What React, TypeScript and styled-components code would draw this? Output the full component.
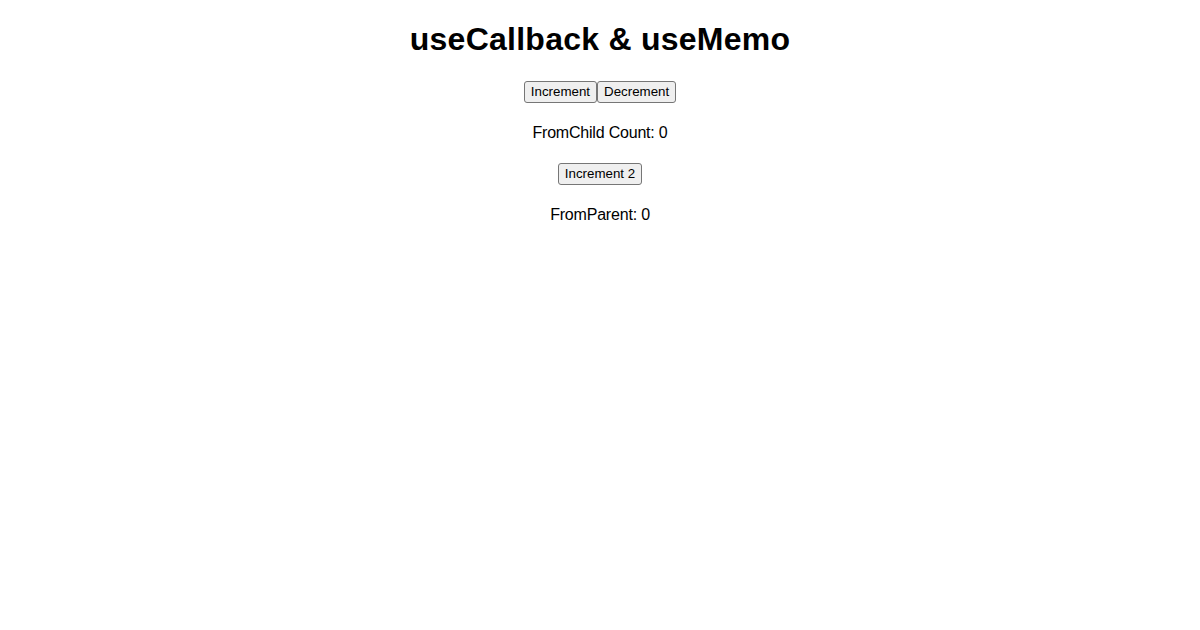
import React, { useCallback, useMemo, useState } from "react";
import styled, { createGlobalStyle } from "styled-components";

const GlobalStyle = createGlobalStyle`
  body {
    margin: 0;
    background: #fff;
    color: #000;
    font-family: "Liberation Sans", Arial, sans-serif;
  }
`;

const Page = styled.div`
  text-align: center;
`;

const Title = styled.h1`
  font-size: 32px;
  font-weight: bold;
  letter-spacing: 0.25px;
  margin: 21.44px 0 22.5px;
`;

const ButtonRow = styled.div`
  display: flex;
  justify-content: center;
`;

const Button = styled.button`
  font-family: "Liberation Sans", Arial, sans-serif;
  font-size: 13.33px;
  height: 22px;
  padding: 0 6px;
  border: 1px solid #767676;
  border-radius: 3px;
  background: #efefef;
  color: #000;
`;

const Line = styled.p`
  font-size: 16px;
  line-height: 20px;
  letter-spacing: -0.2px;
  margin: 20px 0;
`;

function Child({ count, onIncrement }: { count: number; onIncrement: () => void }) {
  return (
    <>
      <Line>FromChild Count: {count}</Line>
      <ButtonRow>
        <Button onClick={onIncrement}>Increment 2</Button>
      </ButtonRow>
    </>
  );
}

export default function App() {
  const [count, setCount] = useState(0);
  const [parent, setParent] = useState(0);

  const increment2 = useCallback(() => setParent((p) => p + 1), []);
  const fromParent = useMemo(() => parent, [parent]);

  return (
    <Page>
      <GlobalStyle />
      <Title>useCallback &amp; useMemo</Title>
      <ButtonRow>
        <Button onClick={() => setCount((c) => c + 1)}>Increment</Button>
        <Button onClick={() => setCount((c) => c - 1)}>Decrement</Button>
      </ButtonRow>
      <Child count={count} onIncrement={increment2} />
      <Line>FromParent: {fromParent}</Line>
    </Page>
  );
}
